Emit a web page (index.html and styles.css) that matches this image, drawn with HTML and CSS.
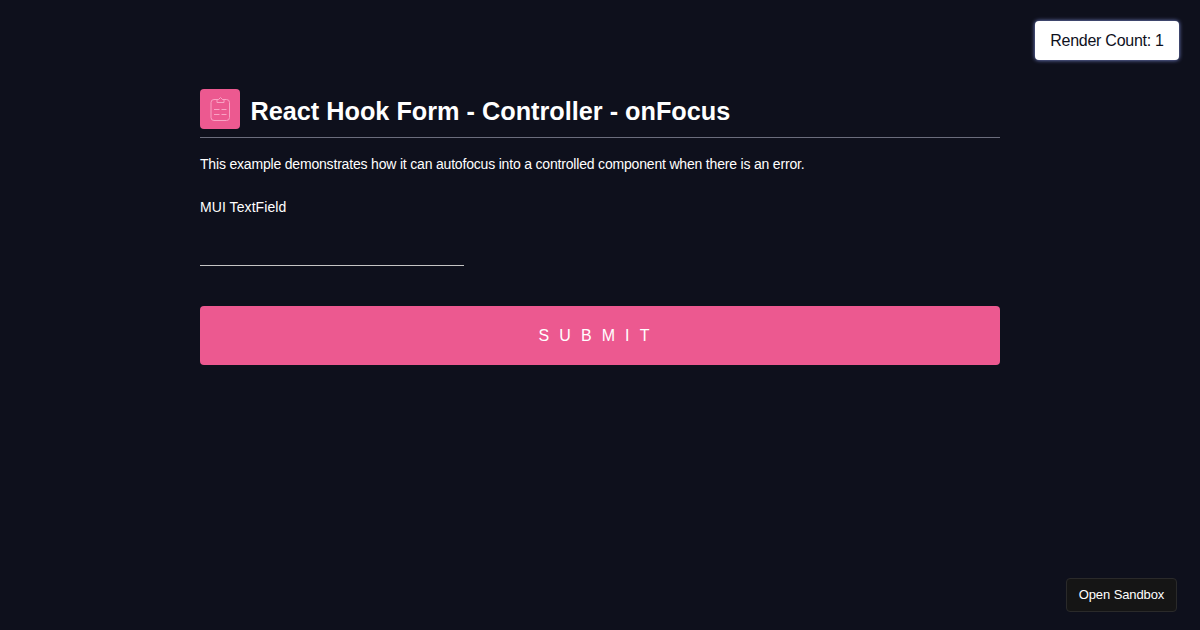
FILE: index.html
```html
<!DOCTYPE html>
<html lang="en">

<head>
  <meta charset="UTF-8" />
  <title>React Hook Form - Controller - onFocus</title>
  <link rel="stylesheet" href="styles.css">
</head>

<body>
  <div class="counter">Render Count: 1</div>

  <form class="form">
    <header class="title">
      <span class="logo">
        <svg width="40" height="40" viewBox="0 0 40 40" fill="none" stroke="#f9a3c4" stroke-width="1">
          <rect x="11" y="10.5" width="18.5" height="21" rx="3" />
          <path d="M17 13.5V10.5H18.5L20.5 8.5L22.5 10.5H24V13.5Z" fill="#ec5990" />
          <path d="M14 20.5H19.5M21.5 20.5H26.5M14 25.5H19.5M21.5 25.5H26.5" />
        </svg>
      </span>
      <h1>React Hook Form - Controller - onFocus</h1>
    </header>

    <p class="intro">This example demonstrates how it can autofocus into a controlled component when there is an error.</p>

    <label class="field-label" for="textField">MUI TextField</label>
    <input class="text-field" id="textField" type="text" />

    <button class="submit" type="button">SUBMIT</button>
  </form>

  <button class="sandbox" type="button">Open Sandbox</button>
</body>

</html>
```

FILE: styles.css
```css
body {
  margin: 0;
  height: 630px;
  overflow: hidden;
  background: #0e101c;
  color: white;
  font-family: "Liberation Sans", Arial, sans-serif;
}

.form {
  width: 800px;
  margin: 0 auto;
  padding-top: 89px;
}

.title {
  display: flex;
  align-items: center;
  gap: 10.5px;
  padding-bottom: 8px;
  border-bottom: 1px solid #6b6d7c;
}

.title h1 {
  margin: 0;
  font-size: 25.25px;
  font-weight: 700;
  line-height: 40px;
  position: relative;
  top: 2px;
}

.logo {
  width: 40px;
  height: 40px;
  border-radius: 4px;
  background: #ec5990;
  display: flex;
}

.intro {
  margin: 18px 0 0;
  font-size: 14px;
  letter-spacing: -0.185px;
  line-height: 16px;
}

.field-label {
  display: block;
  margin-top: 27px;
  font-size: 14px;
  letter-spacing: 0.08px;
  line-height: 16px;
}

.text-field {
  display: block;
  box-sizing: border-box;
  width: 264px;
  height: 32px;
  margin-top: 19px;
  padding: 0;
  background: transparent;
  border: none;
  border-bottom: 1px solid #c4c4c4;
  outline: none;
  color: white;
}

.submit {
  display: block;
  width: 100%;
  height: 59px;
  margin-top: 40px;
  padding: 1px 2px 0 0;
  background: #ec5990;
  color: white;
  border: none;
  border-radius: 4px;
  font-family: inherit;
  font-size: 16px;
  letter-spacing: 10.1px;
  text-transform: uppercase;
}

.counter {
  position: absolute;
  top: 21px;
  right: 21px;
  box-sizing: border-box;
  width: 144px;
  height: 39px;
  border-radius: 4px;
  background: white;
  color: #0e101c;
  font-size: 16px;
  letter-spacing: -0.27px;
  line-height: 39px;
  text-align: center;
  box-shadow: 0 0 4px #8492e0;
}

.sandbox {
  position: absolute;
  right: 23px;
  bottom: 18px;
  box-sizing: border-box;
  width: 111px;
  height: 34px;
  padding: 0 0 2px;
  border: 1px solid #2a2a2a;
  border-radius: 4px;
  background: #151515;
  color: #fff;
  font-family: "Liberation Sans", Arial, sans-serif;
  font-size: 13px;
  letter-spacing: -0.1px;
}
```
